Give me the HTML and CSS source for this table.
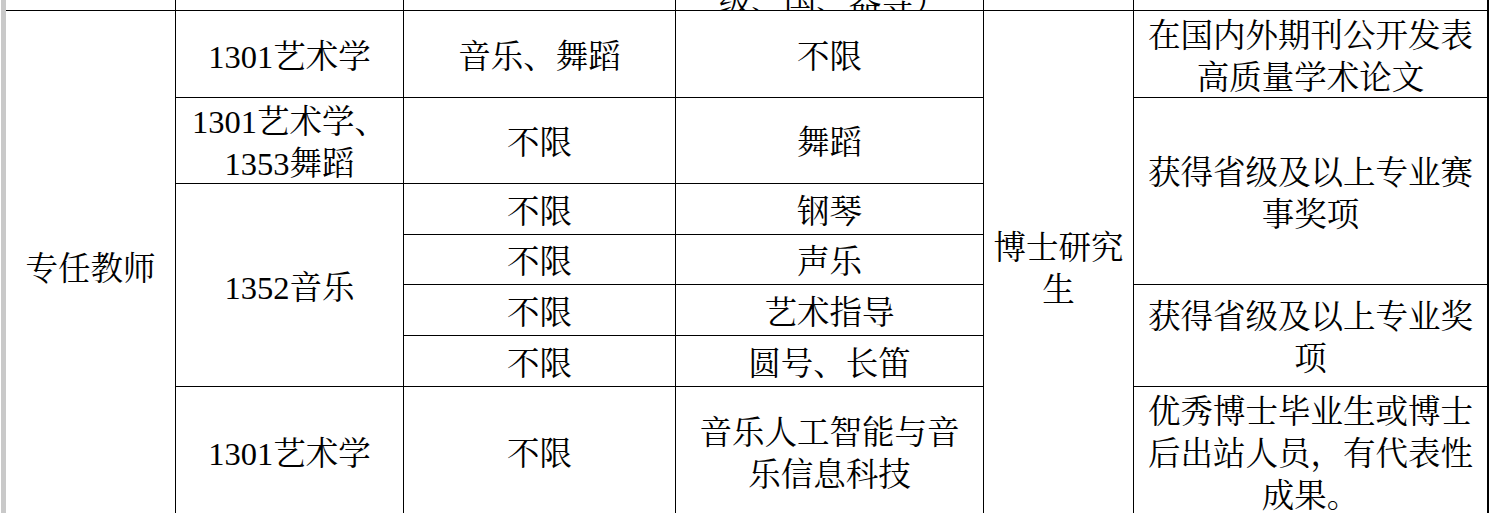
FILE: index.html
```html
<!DOCTYPE html>
<html lang="zh-CN">
<head>
<meta charset="utf-8">
<title>岗位表</title>
<link rel="stylesheet" href="styles.css">
</head>
<body>
<div class="page">
  <div class="edge"></div>
  <div class="sheet">
    <div class="cell top"></div>
    <div class="cell top"></div>
    <div class="cell top"></div>
    <div class="cell top"><span class="cut">级、国、器等）</span></div>
    <div class="cell top"></div>
    <div class="cell top"></div>

    <div class="cell span7">专任教师</div>
    <div class="cell">1301艺术学</div>
    <div class="cell">音乐、舞蹈</div>
    <div class="cell">不限</div>
    <div class="cell span7">博士研究<br>生</div>
    <div class="cell">在国内外期刊公开发表<br>高质量学术论文</div>

    <div class="cell">1301艺术学、<br>1353舞蹈</div>
    <div class="cell">不限</div>
    <div class="cell">舞蹈</div>
    <div class="cell span3">获得省级及以上专业赛<br>事奖项</div>

    <div class="cell span4">1352音乐</div>
    <div class="cell">不限</div>
    <div class="cell">钢琴</div>

    <div class="cell">不限</div>
    <div class="cell">声乐</div>

    <div class="cell">不限</div>
    <div class="cell">艺术指导</div>
    <div class="cell span2">获得省级及以上专业奖<br>项</div>

    <div class="cell">不限</div>
    <div class="cell">圆号、长笛</div>

    <div class="cell last">1301艺术学</div>
    <div class="cell last">不限</div>
    <div class="cell last">音乐人工智能与音<br>乐信息科技</div>
    <div class="cell last">优秀博士毕业生或博士<br>后出站人员，有代表性<br>成果。</div>
  </div>
</div>
</body>
</html>
```

FILE: styles.css
```css
html, body {
  margin: 0;
  padding: 0;
  background: #ffffff;
  overflow: hidden;
}

.page {
  display: flex;
  align-items: flex-start;
  height: 513px;
  overflow: hidden;
}

.edge {
  flex: 0 0 5px;
  margin-left: 1px;
  height: 100%;
  background: #c9c9c9;
}

.sheet {
  display: grid;
  grid-template-columns: 169px 227px 271px 307px 149px 353px;
  grid-template-rows: 10px 86px 85px 50px 49px 50px 50px 134px;
  gap: 1px;
  background: #000000;
  border-right: 2px solid #000000;
  font-family: "Liberation Serif", "Noto Serif CJK SC", "Noto Sans CJK SC", serif;
  font-size: 32.5px;
  line-height: 42px;
  color: #000000;
}

.cell {
  background: #ffffff;
  display: flex;
  flex-direction: column;
  justify-content: center;
  align-items: center;
  text-align: center;
  white-space: nowrap;
  padding-top: 5px;
}

.cell.last {
  padding-top: 0;
}

.top {
  justify-content: flex-end;
  padding-top: 0;
}

.cut {
  display: block;
  margin-bottom: -12px;
  padding-left: 6px;
}

.span2 { grid-row: span 2; }
.span3 { grid-row: span 3; }
.span4 { grid-row: span 4; }
.span7 { grid-row: span 7; }
```
